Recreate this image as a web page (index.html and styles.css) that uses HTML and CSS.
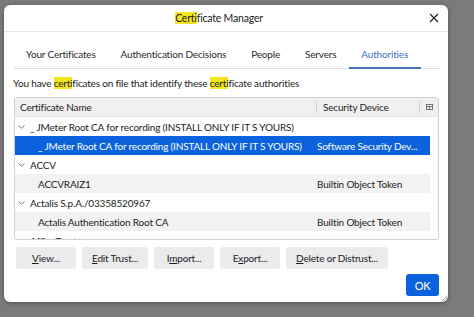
FILE: index.html
```html
<!DOCTYPE html>
<html lang="en">
<head>
    <meta charset="UTF-8">
    <title>Certificate Manager</title>
    <link rel="stylesheet" href="styles.css">
</head>
<body>

<div class="dialog">
    <div class="titlebar">
        <div class="title"><mark>Certi</mark>ficate Manager</div>
        <div class="close">
            <svg width="10" height="10" viewBox="0 0 10 10"><path d="M1 1L9 9M9 1L1 9" stroke="#222" stroke-width="1.2"/></svg>
        </div>
    </div>

    <div class="tabs">
        <div class="tab">Your Certificates</div>
        <div class="tab">Authentication Decisions</div>
        <div class="tab">People</div>
        <div class="tab">Servers</div>
        <div class="tab active">Authorities</div>
    </div>

    <div class="content">
        <p class="intro">You have <mark>certi</mark>ficates on file that identify these <mark>certi</mark>ficate authorities</p>

        <div class="tree">
            <div class="tree-head">
                <div class="col-name">Certificate Name</div>
                <div class="col-device">Security Device</div>
                <div class="col-picker">
                    <svg width="7" height="6" viewBox="0 0 7 6"><rect x="0.5" y="0.5" width="6" height="5" fill="none" stroke="#777"/><path d="M0.5 2.5H6.5M3.5 2.5V5.5" stroke="#777"/></svg>
                </div>
            </div>
            <div class="tree-body">
                <div class="row parent"><span class="name"><svg class="twisty" width="7" height="4" viewBox="0 0 7 4"><path d="M0.5 0.5L3.5 3.2L6.5 0.5" fill="none" stroke="#777"/></svg>_ JMeter Root CA for recording (INSTALL ONLY IF IT S YOURS)</span></div>
                <div class="row child selected"><span class="name">_ JMeter Root CA for recording (INSTALL ONLY IF IT S YOURS)</span><span class="device">Software Security Dev...</span></div>
                <div class="row parent"><span class="name"><svg class="twisty" width="7" height="4" viewBox="0 0 7 4"><path d="M0.5 0.5L3.5 3.2L6.5 0.5" fill="none" stroke="#777"/></svg>ACCV</span></div>
                <div class="row child odd"><span class="name">ACCVRAIZ1</span><span class="device">Builtin Object Token</span></div>
                <div class="row parent"><span class="name"><svg class="twisty" width="7" height="4" viewBox="0 0 7 4"><path d="M0.5 0.5L3.5 3.2L6.5 0.5" fill="none" stroke="#777"/></svg>Actalis S.p.A./03358520967</span></div>
                <div class="row child odd"><span class="name">Actalis Authentication Root CA</span><span class="device">Builtin Object Token</span></div>
                <div class="row parent"><span class="name"><svg class="twisty" width="7" height="4" viewBox="0 0 7 4"><path d="M0.5 0.5L3.5 3.2L6.5 0.5" fill="none" stroke="#777"/></svg>AffirmTrust</span></div>
            </div>
        </div>

        <div class="actions">
            <button><u>V</u>iew...</button>
            <button><u>E</u>dit Trust...</button>
            <button>I<u>m</u>port...</button>
            <button>E<u>x</u>port...</button>
            <button><u>D</u>elete or Distrust...</button>
        </div>

        <div class="footer">
            <button class="primary">OK</button>
        </div>
    </div>

    <svg class="grip" width="8" height="8" viewBox="0 0 8 8"><path d="M7.5 1.5L1.5 7.5M7.5 3.5L3.5 7.5M7.5 5.5L5.5 7.5" stroke="#999" stroke-width="0.8"/></svg>
</div>

</body>
</html>
```

FILE: styles.css
```css
body {
    margin: 0;
    width: 474px;
    height: 317px;
    overflow: hidden;
    background-color: #7a7a7a;
    font-family: "Lato", "Open Sans", sans-serif;
    font-size: 10px;
    letter-spacing: -0.18px;
    color: #1c1c1c;
}
mark {
    background-color: #f3e41c;
    color: inherit;
}
.dialog {
    position: relative;
    margin: 5px 0 0 4px;
    width: 444px;
    height: 297px;
    background-color: #fff;
    border-radius: 6px;
    box-shadow: 0 1px 4px rgba(0, 0, 0, 0.35);
    display: flex;
    flex-direction: column;
}
.titlebar {
    height: 26px;
    border-bottom: 1px solid #e6e6e6;
    display: flex;
    align-items: center;
    justify-content: center;
    position: relative;
}
.title {
    font-size: 10.5px;
    letter-spacing: -0.2px;
    margin-left: -14px;
}
.close {
    position: absolute;
    right: 9px;
    top: 8px;
    line-height: 0;
}
.tabs {
    display: flex;
    margin: 0 8px 0 10px;
    height: 36px;
    border-bottom: 1px solid #dedede;
}
.tab {
    padding: 0 13px 7px 12px;
    display: flex;
    align-items: flex-end;
    color: #2a2a2a;
    border-bottom: 2px solid transparent;
    margin-bottom: -1px;
}
.tab.active {
    color: #3a72c4;
    border-bottom-color: #4a78b3;
}
.content {
    flex: 1;
    display: flex;
    flex-direction: column;
    padding: 0 9px 0 10px;
}
.intro {
    margin: 8px 0 0 -1px;
    line-height: 13px;
}
.tree {
    margin-top: 7px;
    height: 141px;
    border: 1px solid #cfcfcf;
    border-radius: 3px;
    overflow: hidden;
    display: flex;
    flex-direction: column;
}
.tree-head {
    height: 18px;
    flex-shrink: 0;
    background-color: #f0f0f0;
    border-bottom: 1px solid #e4e4e4;
    display: grid;
    grid-template-columns: 301px 104px 1fr;
    align-items: center;
}
.tree-head > div {
    height: 12px;
    display: flex;
    align-items: center;
}
.col-name {
    padding-left: 5px;
}
.col-device {
    padding-left: 6px;
    border-left: 1px solid #cfcfcf;
    border-right: 1px solid #cfcfcf;
}
.col-picker {
    justify-content: center;
}
.tree-body {
    margin-right: 8px;
}
.row {
    height: 19px;
    display: grid;
    grid-template-columns: 302px 1fr;
    align-items: center;
    white-space: nowrap;
}
.row.odd {
    background-color: #f2f2f2;
}
.row.selected {
    background-color: #0b62dc;
    color: #fff;
}
.row .name {
    display: flex;
    align-items: center;
    overflow: hidden;
}
.row.parent .name {
    padding-left: 3px;
}
.row.child .name {
    padding-left: 23px;
}
.twisty {
    margin-right: 5px;
}
.actions {
    display: flex;
    gap: 6px;
    margin: 7px 0 0 2px;
}
button {
    font-family: inherit;
    font-size: 10px;
    letter-spacing: -0.18px;
    color: #1c1c1c;
    height: 22px;
    min-width: 60px;
    padding: 0 10px;
    border: none;
    border-radius: 3px;
    background-color: #ebebed;
}
.footer {
    display: flex;
    justify-content: flex-end;
    margin-top: 5px;
}
button.primary {
    min-width: 33px;
    padding: 0 8px;
    background-color: #0b62dc;
    color: #fff;
    font-size: 11px;
}
.grip {
    position: absolute;
    right: 0;
    bottom: 0;
}
```
